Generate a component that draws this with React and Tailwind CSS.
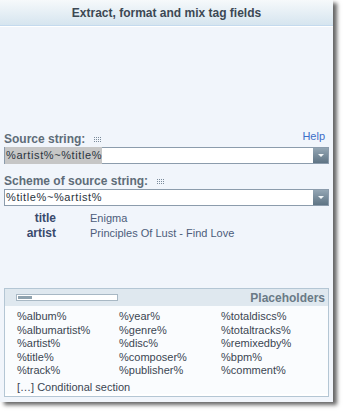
import React from "react";

const font = { fontFamily: '"Liberation Sans", Arial, sans-serif' };

// small dotted grip drawn next to the field labels
function Grip() {
  const dots = [];
  for (let r = 0; r < 3; r++)
    for (let c = 0; c < 4; c++)
      dots.push(<rect key={`${r}-${c}`} x={c * 2} y={r * 2} width="1" height="1" fill="#7a8a9a" />);
  return (
    <svg width="8" height="6" viewBox="0 0 8 6" className="ml-[9px] mt-[1px]">
      {dots}
    </svg>
  );
}

function Combo({ children }) {
  return (
    <div className="flex h-[17px] items-stretch border border-[#8c9cac] bg-white">
      <div className="flex flex-1 items-center text-[11px] tracking-[0.6px] text-[#2a3440]">{children}</div>
      <div className="flex w-[15px] items-center justify-center bg-gradient-to-b from-[#94a6b4] to-[#5f7484]">
        <svg width="6" height="3" viewBox="0 0 6 3">
          <path d="M0 0 L6 0 L3 3 Z" fill="#f2f6f8" />
        </svg>
      </div>
    </div>
  );
}

const placeholders = [
  ["%album%", "%year%", "%totaldiscs%"],
  ["%albumartist%", "%genre%", "%totaltracks%"],
  ["%artist%", "%disc%", "%remixedby%"],
  ["%title%", "%composer%", "%bpm%"],
  ["%track%", "%publisher%", "%comment%"],
];

export default function App() {
  return (
    <div className="h-[418px] w-[348px] bg-white" style={font}>
      <div className="flex h-[402px] w-[333px] flex-col bg-[#f1f5fb] shadow-[4px_3px_4px_rgba(0,0,0,0.6)]">
        {/* header */}
        <div className="flex h-[25px] items-center justify-center bg-gradient-to-b from-[#f6f9fb] to-[#d6e5ef] text-[12px] font-bold text-[#3c4854]">
          Extract, format and mix tag fields
        </div>
        <div className="h-px bg-[#c4daee]" />
        <div className="h-px bg-white" />

        <div className="flex flex-1 flex-col px-[4px] pt-[104px]">
          {/* source string */}
          <div className="flex h-[16px] items-center justify-between">
            <div className="flex items-center text-[12px] font-bold text-[#5e6c78]">
              Source string:
              <Grip />
            </div>
            <span className="mb-[5px] mr-[4px] text-[11px] text-[#3c6ec8]">Help</span>
          </div>
          <Combo>
            <span className="bg-[#c6c6c6] pl-[1px]">%artist%~%title%</span>
          </Combo>

          <div className="mt-[9px] flex h-[16px] items-center text-[12px] font-bold text-[#5e6c78]">
            Scheme of source string:
            <Grip />
          </div>
          <Combo>
            <span className="pl-[1px]">%title%~%artist%</span>
          </Combo>

          {/* preview */}
          <div className="mt-[5px] grid grid-cols-[52px_1fr] gap-x-[34px] text-[12px] leading-[15px]">
            <span className="text-right font-bold text-[#3a4a6c]">title</span>
            <span className="text-[11px] text-[#4c5c7a]">Enigma</span>
            <span className="text-right font-bold text-[#3a4a6c]">artist</span>
            <span className="text-[11px] text-[#4c5c7a]">Principles Of Lust - Find Love</span>
          </div>

          {/* placeholders */}
          <div className="mb-[5px] mt-auto flex h-[109px] flex-col border border-[#b4c6d4] bg-white">
            <div className="flex h-[17px] items-center justify-between bg-[#dfe8ef] pl-[11px] pr-[3px]">
              <div className="h-[7px] w-[102px] border border-[#a8b8c4] bg-white p-px">
                <div className="h-full w-[14px] bg-[#8fa2ae]" />
              </div>
              <span className="text-[12px] font-bold text-[#6a7a86]">Placeholders</span>
            </div>
            <div className="flex flex-col bg-[#fafcfe] pl-[12px] pt-[4px] text-[11px] leading-[13.5px] text-[#3a4652]">
              {placeholders.map((row, i) => (
                <div key={i} className="grid grid-cols-[102px_102px_1fr]">
                  {row.map((p) => (
                    <span key={p}>{p}</span>
                  ))}
                </div>
              ))}
              <div className="mt-[3px]">[…] Conditional section</div>
            </div>
          </div>
        </div>
      </div>
    </div>
  );
}
